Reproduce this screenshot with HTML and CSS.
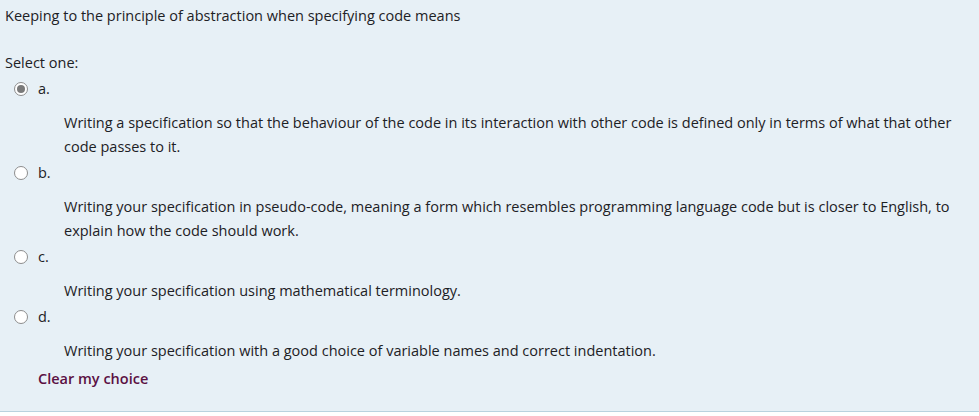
FILE: index.html
```html
<!DOCTYPE html>
<html lang="en">
<head>
    <meta charset="UTF-8">
    <title>Question</title>
    <link rel="stylesheet" href="styles.css">
</head>
<body>
    <div class="formulation">
        <div class="qtext">Keeping to the principle of abstraction when specifying code means</div>
        <div class="ablock">
            <div class="prompt">Select one:</div>
            <div class="answer">
                <div class="option">
                    <label class="choice"><input type="radio" name="q1" checked> <span class="letter">a.</span></label>
                    <div class="opt-text">Writing a specification so that the behaviour of the code in its interaction with other code is defined only in terms of what that other code passes to it.</div>
                </div>
                <div class="option">
                    <label class="choice"><input type="radio" name="q1"> <span class="letter">b.</span></label>
                    <div class="opt-text">Writing your specification in pseudo-code, meaning a form which resembles programming language code but is closer to English, to explain how the code should work.</div>
                </div>
                <div class="option">
                    <label class="choice"><input type="radio" name="q1"> <span class="letter">c.</span></label>
                    <div class="opt-text">Writing your specification using mathematical terminology.</div>
                </div>
                <div class="option">
                    <label class="choice"><input type="radio" name="q1"> <span class="letter">d.</span></label>
                    <div class="opt-text">Writing your specification with a good choice of variable names and correct indentation.</div>
                </div>
            </div>
            <a href="#" class="clear-choice">Clear my choice</a>
        </div>
    </div>
</body>
</html>
```

FILE: styles.css
```css
* {
    margin: 0;
    padding: 0;
    box-sizing: border-box;
}

body {
    font-family: "Open Sans", Lato, sans-serif;
    font-size: 14.5px;
    color: #1d2125;
    background-color: #fff;
}

.formulation {
    background-color: #e7f0f6;
    border-bottom: 1px solid #b9d2df;
    padding: 5px 5px 29px 5px;
    height: 412px;
}

.qtext {
    line-height: 22px;
    margin-bottom: 25px;
}

.prompt {
    line-height: 22px;
    margin-bottom: 3px;
}

.option {
    margin-bottom: 2px;
}

.choice {
    display: flex;
    align-items: center;
    height: 24px;
    padding-left: 9px;
}

.choice input {
    appearance: none;
    -webkit-appearance: none;
    width: 14px;
    height: 14px;
    border: 1px solid #8d8d8d;
    border-radius: 50%;
    background-color: #fff;
    margin-right: 10px;
    display: grid;
    place-items: center;
}

.choice input:checked::before {
    content: "";
    width: 8px;
    height: 8px;
    border-radius: 50%;
    background-color: #7a7a7a;
}

.letter {
    line-height: 24px;
}

.opt-text {
    padding-left: 59px;
    padding-top: 10px;
    line-height: 24px;
    padding-right: 10px;
}

.clear-choice {
    display: inline-block;
    margin-left: 33px;
    margin-top: 2px;
    color: #5b1043;
    font-weight: 600;
    text-decoration: none;
    line-height: 24px;
}
```
